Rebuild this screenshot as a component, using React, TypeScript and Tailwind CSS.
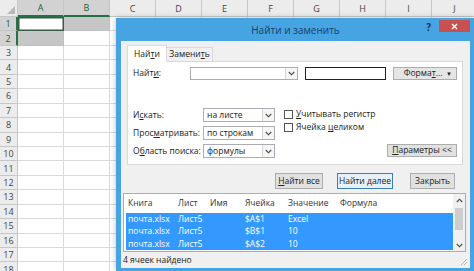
import { Fragment } from "react";

const cols = ["A", "B", "C", "D", "E", "F", "G", "H", "I", "J"];
const rows = Array.from({ length: 18 }, (_, i) => i + 1);

function U({ c }: { c: string }) {
  return <span className="underline underline-offset-1">{c}</span>;
}

function Chevron({ className = "" }: { className?: string }) {
  return (
    <svg width="7" height="5" viewBox="0 0 7 5" className={className}>
      <path d="M0.8 1 L3.5 3.8 L6.2 1" fill="none" stroke="#444" strokeWidth="1.1" />
    </svg>
  );
}

function Sheet() {
  return (
    <div className="grid grid-cols-[18px_repeat(10,46px)] grid-rows-[17px_repeat(18,14.45px)] text-[9px] text-[#444]">
      <div className="relative border-r border-b border-[#c6c6c6] bg-[#ececec]">
        <svg width="8" height="8" viewBox="0 0 8 8" className="absolute bottom-[2px] right-[2px]">
          <path d="M8 0 L8 8 L0 8 Z" fill="#b8b8b8" />
        </svg>
      </div>
      {cols.map((c, i) => (
        <div
          key={c}
          className={
            i < 2
              ? "flex items-center justify-center border-r border-[#c6c6c6] border-b-2 border-b-[#217346] bg-[#d2d2d2] text-[#1d5e3a]"
              : "flex items-center justify-center border-r border-b border-[#c6c6c6] bg-[#ececec]"
          }
        >
          {c}
        </div>
      ))}
      {rows.map((r) => (
        <Fragment key={r}>
          <div
            className={
              r < 3
                ? "flex items-center justify-center border-b border-[#c6c6c6] border-r-2 border-r-[#217346] bg-[#d2d2d2] text-[#1d5e3a]"
                : "flex items-center justify-center border-r border-b border-[#c6c6c6] bg-[#ececec]"
            }
          >
            {r}
          </div>
          {cols.map((c, i) => {
            let cls = "border-r border-b border-[#dadada] bg-white";
            if (r === 1 && i === 0) cls = "bg-white shadow-[inset_0_0_0_1.5px_#3a5a46]";
            else if ((r === 1 && i === 1) || (r === 2 && i === 0)) cls = "border-r border-b border-[#c0c0c0] bg-[#c6c6c6]";
            return <div key={c} className={cls} />;
          })}
        </Fragment>
      ))}
    </div>
  );
}

function Select({ value, w }: { value: string; w: string }) {
  return (
    <div className={`flex h-[14px] ${w} items-stretch border border-[#abadb3] bg-white`}>
      <div className="flex flex-1 items-center pl-[3px] text-[#222]">{value}</div>
      <div className="flex w-[12px] items-center justify-center border-l border-[#d4d4d4] bg-[#f6f6f6]">
        <Chevron />
      </div>
    </div>
  );
}

function Btn({ children, w, focus = false, h = "h-[16px]" }: { children: React.ReactNode; w: string; focus?: boolean; h?: string }) {
  return (
    <div
      className={`flex ${h} ${w} items-center justify-center border ${
        focus ? "border-[#3c7fb1] bg-[#e5f1fb]" : "border-[#adadad] bg-[#e1e1e1]"
      } text-[#222]`}
    >
      <span>{children}</span>
    </div>
  );
}

function Check({ children }: { children: React.ReactNode }) {
  return (
    <div className="flex h-[13px] items-center gap-[3px]">
      <div className="h-[9px] w-[9px] border border-[#555] bg-white" />
      <span>{children}</span>
    </div>
  );
}

const results = [
  ["почта.xlsx", "Лист5", "$A$1", "Excel"],
  ["почта.xlsx", "Лист5", "$B$1", "10"],
  ["почта.xlsx", "Лист5", "$A$2", "10"],
];

function Dialog() {
  return (
    <div className="absolute left-[116px] top-[18px] flex h-[253px] w-[358px] flex-col bg-[#47a4e2] pb-[3px] pl-[5px] pr-[4px] shadow-[0_0_6px_rgba(0,0,0,0.25)]">
      <div className="grid h-[23px] grid-cols-[1fr_auto_1fr]">
        <div />
        <div className="flex items-center text-[10px] text-[#16406a]">Найти и заменить</div>
        <div className="flex items-start justify-end">
          <span className="mr-[8px] mt-[2px] text-[10px] font-bold leading-[14px] text-[#173660]">?</span>
          <div className="mt-[2px] flex h-[12px] w-[31px] items-center justify-center bg-[#c75050]">
            <svg width="7" height="7" viewBox="0 0 7 7">
              <path d="M1 1 L6 6 M6 1 L1 6" stroke="#fff" strokeWidth="1.4" />
            </svg>
          </div>
        </div>
      </div>
      <div className="flex flex-1 flex-col bg-[#f0f0f0] text-[8.5px] text-[#222]">
        <div className="pl-[6px] pr-[7px] pt-[4px]">
          <div className="flex h-[16px] items-end">
            <div className="relative z-10 -mb-px flex h-[17px] w-[40px] items-center justify-center border border-b-0 border-[#d9d9d9] bg-white">
              <span>
                Най<U c="т" />и
              </span>
            </div>
            <div className="flex h-[14px] w-[46px] items-center justify-center border border-b-0 border-l-0 border-[#d9d9d9] bg-[#f0f0f0]">
              <span>
                Замени<U c="т" />ь
              </span>
            </div>
          </div>
          <div className="flex h-[104px] flex-col border border-[#d9d9d9] bg-white pl-[5px] pr-[5px]">
            <div className="mt-[5px] flex h-[13px] items-center">
              <div className="w-[57px]">
                Найт<U c="и" />:
              </div>
              <div className="flex h-[13px] w-[108px] border border-[#abadb3]">
                <div className="flex-1" />
                <div className="flex w-[12px] items-center justify-center border-l border-[#d4d4d4] bg-[#f6f6f6]">
                  <Chevron />
                </div>
              </div>
              <div className="ml-[7px] h-[13px] w-[81px] border border-[#222]" />
              <div className="ml-[7px] flex h-[13px] w-[64px] items-center justify-center border border-[#adadad] bg-[#e5e5e5]">
                <span className="ml-[6px] flex-1 text-center">
                  Форма<U c="т" />...
                </span>
                <span className="mr-[4px] text-[6px]">▼</span>
              </div>
            </div>
            <div className="mt-[28px] flex">
              <div className="flex flex-col gap-[4px]">
                {[
                  [<>И<U c="с" />кать:</>, "на листе"],
                  [<>Прос<U c="м" />атривать:</>, "по строкам"],
                  [<>О<U c="б" />ласть поиска:</>, "формулы"],
                ].map(([l, v], i) => (
                  <div key={i} className="flex h-[14px] items-center">
                    <div className="w-[70px]">{l}</div>
                    <Select value={v as string} w="w-[72px]" />
                  </div>
                ))}
              </div>
              <div className="ml-[9px] flex flex-col">
                <Check>
                  <U c="У" />читывать регистр
                </Check>
                <Check>
                  Ячейка <U c="ц" />еликом
                </Check>
              </div>
              <div className="ml-auto flex flex-col justify-end pb-[1px]">
                <Btn w="w-[70px]" h="h-[13px]">
                  <U c="П" />араметры &lt;&lt;
                </Btn>
              </div>
            </div>
          </div>
        </div>
        <div className="mt-[8px] flex justify-end pr-[15px]">
          <Btn w="w-[48px]">
            <U c="Н" />айти все
          </Btn>
          <div className="ml-[14px]">
            <Btn w="w-[56px]" focus>
              Найти <U c="д" />алее
            </Btn>
          </div>
          <div className="ml-[17px]">
            <Btn w="w-[45px]">Закрыть</Btn>
          </div>
        </div>
        <div className="ml-[2px] mr-[4px] mt-[4px] flex h-[59px] border border-[#abadb3] bg-white">
          <div className="flex flex-1 flex-col">
            <div className="flex h-[19px] items-center pl-[4px] text-[#333]">
              <div className="w-[50px]">Книга</div>
              <div className="w-[32px]">Лист</div>
              <div className="w-[35px]">Имя</div>
              <div className="w-[43px]">Ячейка</div>
              <div className="w-[52px]">Значение</div>
              <div>Формула</div>
            </div>
            <div className="ml-[2px] flex flex-col bg-[#3399ff] text-white">
              {results.map((r, i) => (
                <div key={i} className="flex h-[12.4px] items-center pl-[2px]">
                  <div className="w-[50px]">{r[0]}</div>
                  <div className="w-[67px]">{r[1]}</div>
                  <div className="w-[43px]">{r[2]}</div>
                  <div>{r[3]}</div>
                </div>
              ))}
            </div>
          </div>
          <div className="flex w-[12px] flex-col items-center bg-[#f0f0f0]">
            <div className="flex h-[12px] items-center justify-center">
              <Chevron className="rotate-180" />
            </div>
            <div className="mt-[2px] h-[22px] w-[8px] bg-[#cdcdcd]" />
            <div className="flex-1" />
            <div className="flex h-[12px] items-center justify-center">
              <Chevron />
            </div>
          </div>
        </div>
        <div className="relative flex h-[16px] items-center pl-[2px]">
          4 ячеек найдено
          <svg width="8" height="8" viewBox="0 0 8 8" className="absolute bottom-[2px] right-[2px]">
            <path d="M7 1 L1 7 M7 4 L4 7" stroke="#b5b5b5" strokeWidth="1" />
          </svg>
        </div>
      </div>
    </div>
  );
}

export default function App() {
  return (
    <div className="relative h-[271px] w-[474px] overflow-hidden bg-white font-['Open_Sans',sans-serif] leading-none">
      <Sheet />
      <Dialog />
    </div>
  );
}
